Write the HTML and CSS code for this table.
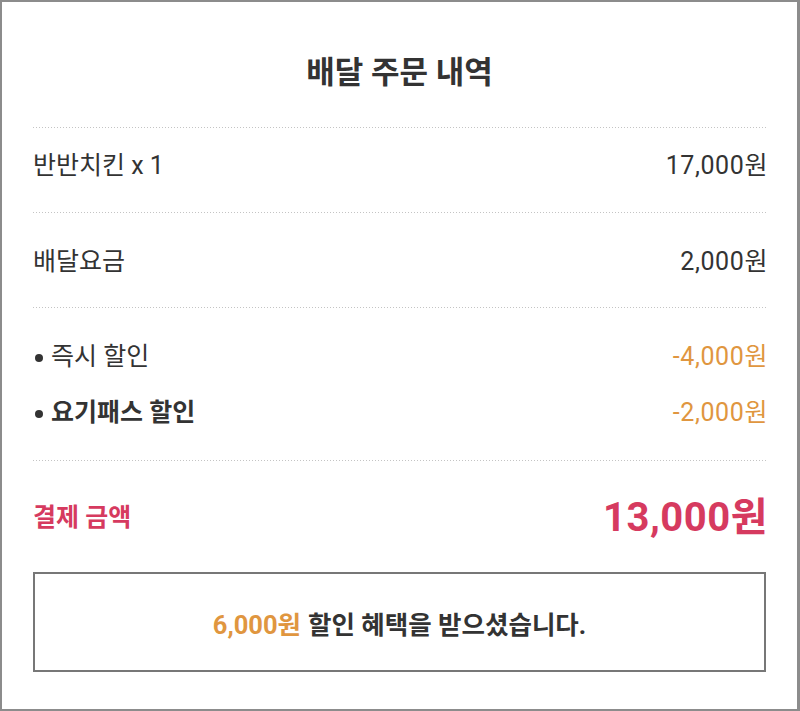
FILE: index.html
```html
<!DOCTYPE html>
<html lang="ko">
<head>
<meta charset="utf-8">
<title>배달 주문 내역</title>
<link rel="stylesheet" href="styles.css">
</head>
<body>
<div class="page">
  <h1 class="title">배달 주문 내역</h1>
  <div class="sep"></div>
  <div class="row row-item">
    <span class="label">반반치킨 x 1</span>
    <span class="amount">17,000원</span>
  </div>
  <div class="sep"></div>
  <div class="row row-fee">
    <span class="label">배달요금</span>
    <span class="amount">2,000원</span>
  </div>
  <div class="sep"></div>
  <div class="discounts">
    <div class="row row-disc">
      <span class="label"><span class="dot"></span>즉시 할인</span>
      <span class="amount discount">-4,000원</span>
    </div>
    <div class="row row-disc">
      <span class="label strong"><span class="dot"></span>요기패스 할인</span>
      <span class="amount discount">-2,000원</span>
    </div>
  </div>
  <div class="sep"></div>
  <div class="row row-total">
    <span class="label total-label">결제 금액</span>
    <span class="amount total-amount">13,000원</span>
  </div>
  <div class="notice">
    <span class="notice-amount">6,000원</span> 할인 혜택을 받으셨습니다.
  </div>
</div>
</body>
</html>
```

FILE: styles.css
```css
* { box-sizing: border-box; }
html, body { margin: 0; padding: 0; background: #fff; }
body {
  font-family: Roboto, "Noto Sans CJK KR", sans-serif;
  color: #333;
}
.page {
  width: 800px;
  height: 711px;
  border: 2px solid #8c8c8c;
  border-right-width: 3px;
  padding: 0 31px;
  display: flex;
  flex-direction: column;
}
.title {
  margin: 0;
  padding: 50px 0 33px;
  font-size: 31px;
  line-height: 42px;
  font-weight: 700;
  text-align: center;
  color: #333;
}
.sep {
  height: 1px;
  background-image: repeating-linear-gradient(to right, #c4c4c4 0 1px, transparent 1px 3px);
}
.row {
  display: flex;
  justify-content: space-between;
  align-items: center;
  font-size: 25px;
  line-height: 36px;
}
.amount { letter-spacing: 0.6px; margin-right: -2px; }
.row-item { padding: 20px 0 28px; }
.row-fee { padding: 31px 0 27px; }
.discounts { padding: 31px 0 29px; display: flex; flex-direction: column; gap: 20px; }
.label { display: flex; align-items: center; }
.strong { font-weight: 700; }
.dot {
  width: 8px; height: 8px; border-radius: 50%;
  background: #333;
  margin: 2px 8px 0 2px;
}
.discount { color: #e0963f; }
.row-total { padding: 33px 0 30px; }
.total-label { color: #d63a5f; font-weight: 700; }
.total-amount { color: #d63a5f; font-weight: 700; font-size: 40px; line-height: 48px; letter-spacing: 0.5px; }
.notice {
  height: 100px;
  border: 2px solid #777;
  display: flex;
  align-items: center;
  justify-content: center;
  font-size: 25.5px;
  font-weight: 700;
  color: #333;
}
.notice-amount { color: #e0963f; margin-right: 7px; }
```
